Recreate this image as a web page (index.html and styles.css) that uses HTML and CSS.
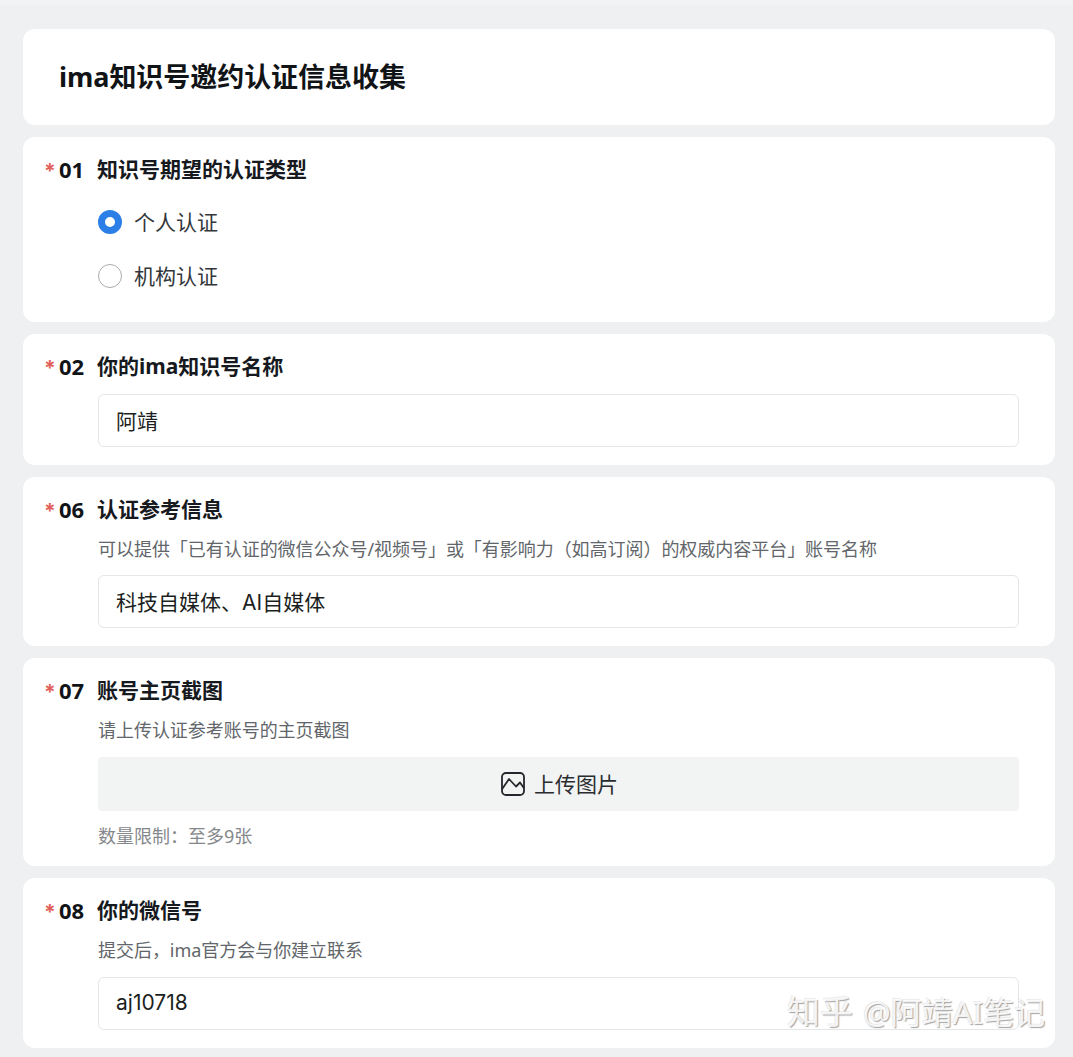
FILE: index.html
```html
<!DOCTYPE html>
<html lang="zh-CN">
<head>
<meta charset="utf-8">
<title>ima知识号邀约认证信息收集</title>
<link rel="stylesheet" href="styles.css">
</head>
<body>
<main class="form">
  <header class="card head"><h1>ima知识号邀约认证信息收集</h1></header>

  <section class="card q q-radio">
    <div class="q-title"><span class="star">*</span><span class="num">01</span><span class="label">知识号期望的认证类型</span></div>
    <div class="options">
      <div class="option"><span class="radio on"></span><span class="option-text">个人认证</span></div>
      <div class="option"><span class="radio"></span><span class="option-text">机构认证</span></div>
    </div>
  </section>

  <section class="card q q-name">
    <div class="q-title"><span class="star">*</span><span class="num">02</span><span class="label">你的ima知识号名称</span></div>
    <div class="input">阿靖</div>
  </section>

  <section class="card q">
    <div class="q-title"><span class="star">*</span><span class="num">06</span><span class="label">认证参考信息</span></div>
    <p class="desc desc-tight">可以提供「已有认证的微信公众号/视频号」或「有影响力（如高订阅）的权威内容平台」账号名称</p>
    <div class="input">科技自媒体、AI自媒体</div>
  </section>

  <section class="card q">
    <div class="q-title"><span class="star">*</span><span class="num">07</span><span class="label">账号主页截图</span></div>
    <p class="desc">请上传认证参考账号的主页截图</p>
    <div class="upload">
      <svg class="upload-icon" viewBox="0 0 24 24" width="24" height="24" fill="none" stroke="#24272b" stroke-width="1.8" stroke-linejoin="round" stroke-linecap="round">
        <rect x="1" y="1" width="22" height="22" rx="4"/>
        <path d="M1.5 16.5 L8 7 L15 14.5 L19 10.5 L22.5 15.5"/>
      </svg>
      <span class="upload-text">上传图片</span>
    </div>
    <p class="limit">数量限制：至多9张</p>
  </section>

  <section class="card q">
    <div class="q-title"><span class="star">*</span><span class="num">08</span><span class="label">你的微信号</span></div>
    <p class="desc">提交后，ima官方会与你建立联系</p>
    <div class="input">aj10718</div>
  </section>
</main>
<div class="watermark"><span class="wm-logo">知乎</span><span class="wm-handle">@阿靖AI笔记</span></div>
</body>
</html>
```
FILE: styles.css
```css
* { box-sizing: border-box; }
html, body { margin: 0; height: 100%; }
body {
  position: relative;
  height: 1057px;
  overflow: hidden;
  background: linear-gradient(#f2f3f4 0 5px, #eef0f2 5px);
  font-family: "Noto Sans", "Noto Sans CJK SC", sans-serif;
  color: #16191d;
}
.form {
  display: flex;
  flex-direction: column;
  gap: 12px;
  width: 1032px;
  margin-left: 23px;
  padding-top: 29px;
}
.card { background: #fff; border-radius: 12px; }
.head { height: 96px; padding: 0 36px; display: flex; align-items: center; }
h1 { margin: 0; font-size: 27px; line-height: 36px; font-weight: 700; letter-spacing: -.05px; color: #111417; }
.q { padding: 17px 36px 18px 22px; }
.q-title { display: flex; align-items: center; height: 30px; }
.star { width: 14px; margin-left: -1px; font-family: Inter, sans-serif; color: #e2605c; font-size: 21px; font-weight: 700; line-height: 30px; position: relative; top: 3px; }
.num { width: 39px; padding-left: 1px; font-size: 22px; line-height: 28px; font-weight: 700; color: #111417; }
.label { font-size: 21px; line-height: 28px; font-weight: 700; color: #16191d; }
.options { margin: 11px 0 0 53px; display: flex; flex-direction: column; }
.option { display: flex; align-items: center; gap: 12px; height: 54px; font-size: 21px; color: #33373b; }
.option-text { margin-bottom: 2px; }
.radio { width: 24px; height: 24px; border-radius: 50%; border: 1px solid #a9abad; background: #fff; }
.radio.on { border: 7px solid #2d7fe8; }
.q-radio { padding-bottom: 19px; }
.desc { margin: 13px 0 15px 53px; font-size: 18px; line-height: 24px; letter-spacing: -.04px; color: #62666a; }
.desc-tight { margin-bottom: 14px; }
.limit { margin: 13px 0 0 53px; font-size: 18px; line-height: 24px; color: #85888b; }
.input {
  margin-left: 53px;
  height: 53px;
  padding: 0 17px 2px;
  display: flex;
  align-items: center;
  border: 1px solid #e4e6e8;
  border-radius: 6px;
  font-family: Inter, "Noto Sans CJK SC", sans-serif;
  font-size: 21px;
  color: #1c1f22;
}
.q-name .input { margin-top: 13px; }
.upload {
  margin-left: 53px;
  height: 54px;
  padding-left: 2px;
  display: flex;
  align-items: center;
  justify-content: center;
  gap: 9px;
  background: #f2f3f3;
  border-radius: 4px;
  font-size: 21px;
  color: #2a2d30;
}
.upload-text { margin-bottom: 2px; }
.watermark {
  position: absolute;
  left: 787px;
  top: 990px;
  display: flex;
  align-items: center;
  gap: 10px;
  height: 40px;
  white-space: nowrap;
  color: rgba(255,255,255,.85);
  text-shadow: 1px 1px 1px rgba(90,90,90,.55), -1px -1px 0 rgba(190,190,190,.3);
}
.wm-logo { font-size: 33px; }
.wm-handle { font-size: 31px; }
```
